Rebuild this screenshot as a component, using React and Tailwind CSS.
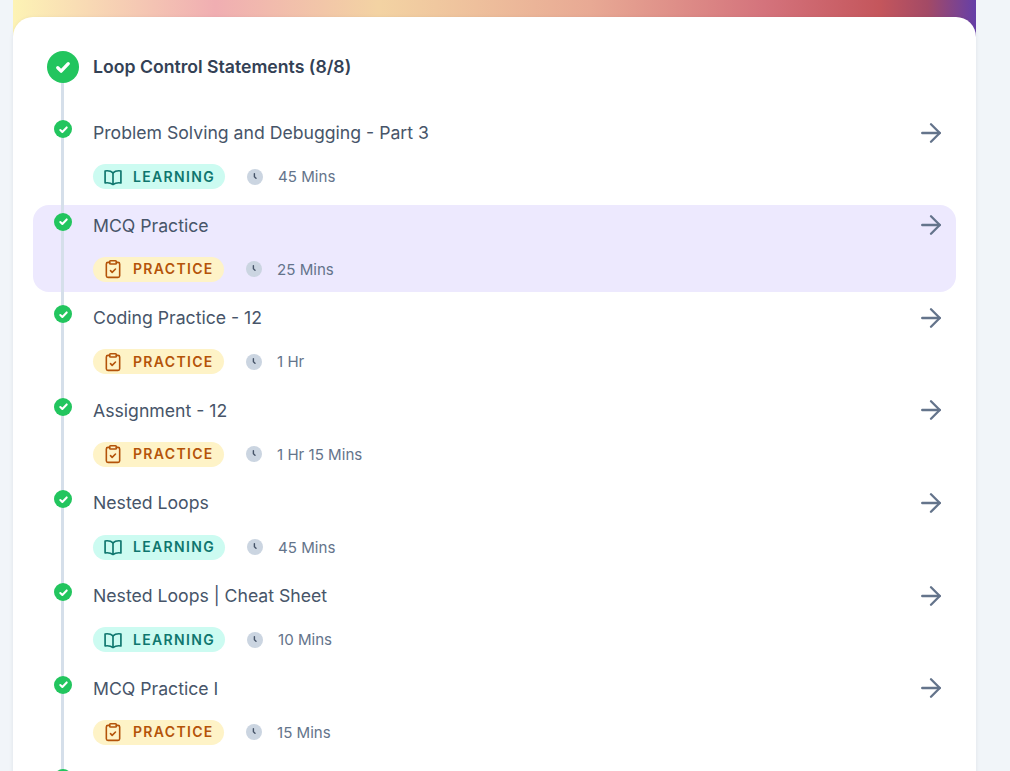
import { ArrowRight, ClipboardCheck } from "lucide-react";

const rows = [
  { title: "Problem Solving and Debugging - Part 3", type: "LEARNING", time: "45 Mins" },
  { title: "MCQ Practice", type: "PRACTICE", time: "25 Mins", active: true },
  { title: "Coding Practice - 12", type: "PRACTICE", time: "1 Hr" },
  { title: "Assignment - 12", type: "PRACTICE", time: "1 Hr 15 Mins" },
  { title: "Nested Loops", type: "LEARNING", time: "45 Mins" },
  { title: "Nested Loops | Cheat Sheet", type: "LEARNING", time: "10 Mins" },
  { title: "MCQ Practice I", type: "PRACTICE", time: "15 Mins" },
];

function Check({ big }) {
  return (
    <span className={big ? "flex h-8 w-8 shrink-0 items-center justify-center rounded-full bg-[#22c55e] relative z-10" : "flex h-[18px] w-[18px] shrink-0 items-center justify-center rounded-full bg-[#22c55e] relative z-10"}>
      <svg viewBox="0 0 24 24" className={big ? "h-[18px] w-[18px]" : "h-[11px] w-[11px]"} fill="none" stroke="white" strokeWidth="4.4" strokeLinecap="round" strokeLinejoin="round">
        <path d="M5 13l4.5 4.5L19 7.5" />
      </svg>
    </span>
  );
}

function Clock() {
  return (
    <span className="flex h-4 w-4 items-center justify-center rounded-full bg-[#cbd5e1]">
      <svg viewBox="0 0 16 16" className="h-4 w-4" fill="none" stroke="#475569" strokeWidth="1.4" strokeLinecap="round" strokeLinejoin="round">
        <path d="M7.4 4.6v3.2l1.6 1.4" />
      </svg>
    </span>
  );
}

function Book() {
  return (
    <svg viewBox="0 0 24 24" width="20" height="20" fill="none" stroke="currentColor" strokeWidth="2" strokeLinecap="round" strokeLinejoin="round">
      <path d="M12 7C10.5 5.5 8 4.5 5 4.5c-.9 0-1.8.1-2.5.3v14.4c.7-.2 1.6-.3 2.5-.3 3 0 5.5 1 7 2.1 1.5-1.1 4-2.1 7-2.1.9 0 1.8.1 2.5.3V4.8c-.7-.2-1.6-.3-2.5-.3-3 0-5.500 1-7 2.500z" />
      <path d="M12 7v13.500" />
    </svg>
  );
}

function Chip({ type }) {
  const learning = type === "LEARNING";
  return (
    <span className={learning ? "flex h-[25px] w-[132px] items-center rounded-full bg-[#ccfbf1] pl-[10px] text-[#0f766e]" : "flex h-[25px] w-[131px] items-center rounded-full bg-[#fef3c7] pl-[10px] text-[#b45309]"}>
      {learning ? <Book /> : <ClipboardCheck size={20} strokeWidth={1.9} />}
      <span className="ml-[10px] text-[14px] font-semibold leading-none tracking-[0.095em]">{type}</span>
    </span>
  );
}

function Row({ title, type, time, active }) {
  return (
    <div className={active ? "mb-[5.6px] flex h-[87px] rounded-[16px] bg-[#ede9fe] pl-[21px] pr-[10px] pt-[6px]" : "mb-[5.6px] flex h-[87px] rounded-[16px] pl-[21px] pr-[10px] pt-[6px]"}>
      <div className="mt-[1.7px]"><Check /></div>
      <div className="ml-[21px] flex-1">
        <div className="flex h-7 items-center justify-between">
          <span className="pt-[1.4px] text-[17.65px] leading-7 text-[#475569]">{title}</span>
          <ArrowRight size={30} strokeWidth={1.9} className="mt-[0.6px] text-[#64748b]" />
        </div>
        <div className="mt-[17.8px] flex items-center">
          <Chip type={type} />
          <span className="ml-[22px]"><Clock /></span>
          <span className="ml-[15px] text-[15.1px] leading-none text-[#64748b]">{time}</span>
        </div>
      </div>
    </div>
  );
}

export default function App() {
  return (
    <div className="h-[771px] overflow-hidden bg-[#f1f5f9] pl-[13px] font-['Inter',sans-serif]">
      <div className="w-[963px]">
        <div className="-mb-[23px] h-[40px] bg-[linear-gradient(90deg,#fdf3b5_0%,#f0aeb2_21%,#f3d3a3_38%,#e8a994_60%,#d4737c_78%,#c4565c_90%,#a34a66_95%,#653fa8_100%)]" />
        <div className="relative h-[800px] rounded-t-[20px] bg-white px-[20px] pt-[34px] shadow-[0_1px_4px_rgba(15,23,42,0.08)]">
          <div className="absolute bottom-0 left-[48px] top-[50px] w-[3px] bg-[#d5dfea]" />
          <div className="mb-[29.4px] flex h-8 items-center pl-[14px]">
            <Check big />
            <span className="ml-[14px] text-[17.65px] font-semibold text-[#334155]">Loop Control Statements (8/8)</span>
          </div>
          {rows.map((r) => (
            <Row key={r.title} {...r} />
          ))}
          <div className="flex pl-[21px] pt-[8px]"><Check /></div>
        </div>
      </div>
    </div>
  );
}
